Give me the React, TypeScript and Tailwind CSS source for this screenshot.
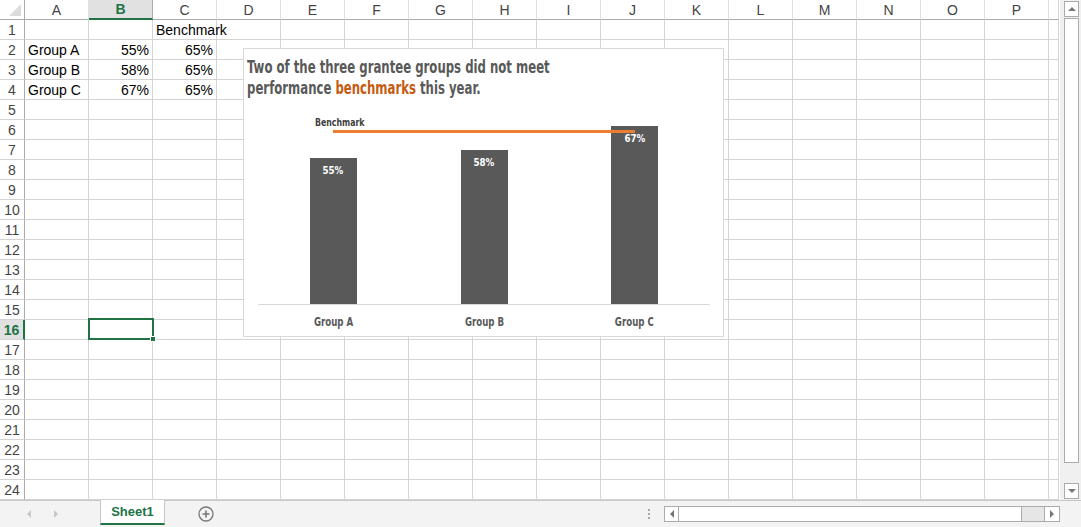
import React from 'react';

const COLS = ['A', 'B', 'C', 'D', 'E', 'F', 'G', 'H', 'I', 'J', 'K', 'L', 'M', 'N', 'O', 'P'];
const ROWS = Array.from({ length: 24 }, (_, i) => i + 1);

// cell values: [row][col]
const DATA: Record<number, Record<string, { v: string; right?: boolean }>> = {
  1: { C: { v: 'Benchmark' } },
  2: { A: { v: 'Group A' }, B: { v: '55%', right: true }, C: { v: '65%', right: true } },
  3: { A: { v: 'Group B' }, B: { v: '58%', right: true }, C: { v: '65%', right: true } },
  4: { A: { v: 'Group C' }, B: { v: '67%', right: true }, C: { v: '65%', right: true } },
};

const BARS = [
  { label: 'Group A', value: 55 },
  { label: 'Group B', value: 58 },
  { label: 'Group C', value: 67 },
];

const PX_PER_PCT = 2.655;

function Chart() {
  return (
    <div className="absolute left-[243px] top-[48px] w-[481px] h-[289px] bg-white border border-[#d9d9d9] font-['Liberation_Sans_Narrow','DejaVu_Sans_Condensed',sans-serif]">
      {/* Title - condensed face stretched to match */}
      <div className="pl-[4px] pt-[8px] text-[17px] leading-[21px] font-bold text-[#595959] whitespace-nowrap scale-x-[0.765] origin-left">
        <p>Two of the three grantee groups did not meet</p>
        <p>
          performance <span className="text-[#c55a11]">benchmarks</span> this year.
        </p>
      </div>

      {/* Plot */}
      <div className="absolute left-[14px] top-[40px] w-[452px] h-[216px] flex items-end border-b border-[#d9d9d9]">
        {BARS.map((b) => (
          <div key={b.label} className="flex-1 flex justify-center">
            <div
              className="w-[47px] bg-[#595959] flex justify-center pt-[6px]"
              style={{ height: Math.round(b.value * PX_PER_PCT) }}
            >
              <span className="text-[11px] font-bold text-white leading-[14px] scale-x-[0.88]">{b.value}%</span>
            </div>
          </div>
        ))}
      </div>

      {/* Category labels */}
      <div className="absolute left-[14px] top-[265px] w-[452px] flex">
        {BARS.map((b) => (
          <div key={b.label} className="flex-1 flex justify-center">
            <span className="text-[12px] font-bold text-[#595959] leading-[16px] whitespace-nowrap scale-x-[0.8]">
              {b.label}
            </span>
          </div>
        ))}
      </div>

      {/* Benchmark line */}
      <div className="absolute left-[89px] top-[81px] w-[302px] h-[3px] bg-[#ed7d31]" />
      <div className="absolute left-[71px] top-[67px] text-[10px] font-bold text-[#404040] leading-[13px] whitespace-nowrap scale-x-[0.87] origin-left">
        Benchmark
      </div>
    </div>
  );
}

function Grid() {
  return (
    <div className="relative w-[1060px] h-[500px] overflow-hidden bg-white font-['Liberation_Sans',Arial,sans-serif] text-[14px]">
      <div className="grid grid-cols-[25px_repeat(16,64px)_10px] grid-rows-[20px_repeat(24,20px)]">
        {/* corner */}
        <div className="relative border-r border-b border-[#ababab] bg-white">
          <div className="absolute right-[3px] bottom-[3px] w-0 h-0 border-l-[12px] border-l-transparent border-b-[12px] border-b-[#dcdcdc]" />
        </div>
        {COLS.map((c) => (
          <div
            key={c}
            className={
              'flex items-center justify-center border-r leading-none ' +
              (c === 'B'
                ? 'bg-[#e1e1e1] text-[#217346] font-bold border-b-2 border-b-[#217346] border-r-[#ababab]'
                : 'bg-white text-[#444444] border-b border-b-[#ababab] border-r-[#e1e1e1]')
            }
          >
            {c}
          </div>
        ))}
        <div className="bg-white border-b border-[#ababab] border-r border-r-[#d4d4d4]" />

        {ROWS.map((r) => (
          <React.Fragment key={r}>
            <div
              className={
                'flex items-center justify-center border-b border-b-[#d4d4d4] leading-none ' +
                (r === 16
                  ? 'bg-[#e1e1e1] text-[#217346] font-bold border-r-2 border-r-[#217346]'
                  : 'bg-white text-[#444444] border-r border-r-[#ababab]')
              }
            >
              {r}
            </div>
            {COLS.map((c) => {
              const cell = DATA[r]?.[c];
              return (
                <div
                  key={c}
                  className={
                    'flex items-center border-r border-b border-[#d4d4d4] px-[3px] leading-none text-black whitespace-nowrap ' +
                    (cell?.right ? 'justify-end' : 'justify-start')
                  }
                >
                  {cell?.v}
                </div>
              );
            })}
            <div className="border-r border-b border-[#d4d4d4]" />
          </React.Fragment>
        ))}
      </div>

      {/* Active cell B16 */}
      <div className="absolute left-[88px] top-[318px] w-[66px] h-[22px] border-2 border-[#217346]">
        <div className="absolute right-[-4px] bottom-[-4px] w-[6px] h-[6px] bg-[#217346] border border-white" />
      </div>

      <Chart />
    </div>
  );
}

function VScroll() {
  return (
    <div className="w-[21px] h-[500px] bg-[#f0f0f0] flex flex-col items-center pt-[1px] pl-[2px]">
      <div className="w-[15px] h-[16px] bg-white border border-[#ababab] flex items-center justify-center">
        <div className="w-0 h-0 border-l-[4px] border-r-[4px] border-b-[4px] border-l-transparent border-r-transparent border-b-[#777777]" />
      </div>
      <div className="w-[15px] h-[445px] bg-white border border-[#ababab] mt-[1px]" />
      <div className="flex-1" />
      <div className="w-[15px] h-[16px] bg-white border border-[#ababab] mb-[1px] flex items-center justify-center">
        <div className="w-0 h-0 border-l-[4px] border-r-[4px] border-t-[4px] border-l-transparent border-r-transparent border-t-[#777777]" />
      </div>
    </div>
  );
}

function TabBar() {
  return (
    <div className="h-[27px] bg-[#f3f3f3] border-t border-[#c6c6c6] flex items-start font-['Liberation_Sans',Arial,sans-serif]">
      {/* nav arrows */}
      <div className="w-[100px] h-[26px] flex items-center pl-[27px] gap-[23px]">
        <div className="w-0 h-0 border-t-[4px] border-b-[4px] border-r-[4px] border-t-transparent border-b-transparent border-r-[#c8c8c8]" />
        <div className="w-0 h-0 border-t-[4px] border-b-[4px] border-l-[4px] border-t-transparent border-b-transparent border-l-[#c8c8c8]" />
      </div>
      {/* sheet tab */}
      <div className="-mt-px w-[65px] h-[25px] bg-white border-x border-[#c6c6c6] border-b-2 border-b-[#217346] flex items-center justify-center text-[13px] font-bold text-[#217346]">
        Sheet1
      </div>
      {/* add sheet */}
      <div className="ml-[33px] h-[26px] flex items-center">
        <svg width="16" height="16" viewBox="0 0 16 16">
          <circle cx="8" cy="8" r="7" fill="none" stroke="#777777" strokeWidth="1.3" />
          <path d="M8 4.5v7M4.5 8h7" stroke="#777777" strokeWidth="1.6" />
        </svg>
      </div>
      <div className="flex-1" />
      {/* split dots */}
      <div className="h-[26px] flex flex-col justify-center gap-[2px] mr-[14px]">
        <div className="w-[2px] h-[2px] bg-[#aaaaaa]" />
        <div className="w-[2px] h-[2px] bg-[#aaaaaa]" />
        <div className="w-[2px] h-[2px] bg-[#aaaaaa]" />
      </div>
      {/* horizontal scrollbar */}
      <div className="mt-[5px] w-[396px] h-[16px] flex border border-[#ababab] bg-[#e6e6e6]">
        <div className="w-[14px] h-full bg-white border-r border-[#ababab] flex items-center justify-center">
          <div className="w-0 h-0 border-t-[4px] border-b-[4px] border-r-[4px] border-t-transparent border-b-transparent border-r-[#777777]" />
        </div>
        <div className="w-[343px] h-full bg-white border-r border-[#ababab]" />
        <div className="flex-1" />
        <div className="w-[15px] h-full bg-white border-l border-[#ababab] flex items-center justify-center">
          <div className="w-0 h-0 border-t-[4px] border-b-[4px] border-l-[4px] border-t-transparent border-b-transparent border-l-[#777777]" />
        </div>
      </div>
      <div className="w-[21px]" />
    </div>
  );
}

export default function App() {
  return (
    <div className="w-[1081px] h-[527px] overflow-hidden bg-white flex flex-col">
      <div className="flex">
        <Grid />
        <VScroll />
      </div>
      <TabBar />
    </div>
  );
}
